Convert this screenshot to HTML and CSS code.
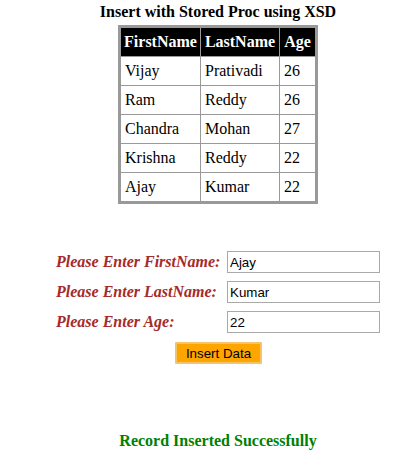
FILE: index.html
```html
<!DOCTYPE html>
<html>
<head>
<meta charset="utf-8">
<link rel="stylesheet" href="styles.css">
</head>
<body>
<div class="page">
  <div class="title">Insert with Stored Proc using XSD</div>
  <table class="grid">
    <thead>
      <tr><th class="c1">FirstName</th><th class="c2">LastName</th><th class="c3">Age</th></tr>
    </thead>
    <tbody>
      <tr><td class="c1">Vijay</td><td class="c2">Prativadi</td><td class="c3">26</td></tr>
      <tr><td class="c1">Ram</td><td class="c2">Reddy</td><td class="c3">26</td></tr>
      <tr><td class="c1">Chandra</td><td class="c2">Mohan</td><td class="c3">27</td></tr>
      <tr><td class="c1">Krishna</td><td class="c2">Reddy</td><td class="c3">22</td></tr>
      <tr><td class="c1">Ajay</td><td class="c2">Kumar</td><td class="c3">22</td></tr>
    </tbody>
  </table>
  <form class="form" onsubmit="return false;">
    <label class="label" for="fn">Please Enter FirstName:</label>
    <input class="field" id="fn" type="text" value="Ajay">
    <label class="label" for="ln">Please Enter LastName:</label>
    <input class="field" id="ln" type="text" value="Kumar">
    <label class="label" for="ag">Please Enter Age:</label>
    <input class="field" id="ag" type="text" value="22">
    <div class="actions"><button class="btn" type="submit">Insert Data</button></div>
  </form>
  <div class="msg">Record Inserted Successfully</div>
</div>
</body>
</html>
```
FILE: styles.css
```css
html, body {
  margin: 0;
  padding: 0;
  background: #ffffff;
}
body {
  font-family: "Liberation Serif", "Times New Roman", serif;
  font-size: 16px;
  color: #000;
}
.page {
  display: flex;
  flex-direction: column;
  align-items: center;
  padding: 3px 0 0 19px;
}
.title {
  font-weight: bold;
  line-height: 18px;
  height: 18px;
}
.grid {
  margin-top: 4px;
  border: 3px solid #999999;
  border-spacing: 0;
  border-collapse: separate;
}
.grid th, .grid td {
  padding: 0 4px;
  border-right: 1px solid #999999;
  border-bottom: 1px solid #999999;
  box-sizing: border-box;
}
.grid th:last-child, .grid td:last-child {
  border-right: none;
}
.grid tbody tr:last-child td {
  border-bottom: none;
}
.grid th {
  background: #000;
  color: #fff;
  font-weight: bold;
  height: 29px;
  text-align: center;
  padding: 0 1px;
}
.grid td {
  height: 29px;
  text-align: left;
}
.grid tbody tr:last-child td {
  height: 28px;
}
.c1 { width: 80px; }
.c2 { width: 79px; }
.c3 { width: 35px; }
.form {
  margin: 47px 0 0 0;
  display: grid;
  grid-template-columns: 171px 153px;
  row-gap: 8px;
  align-items: center;
}
.label {
  font-weight: bold;
  font-style: italic;
  color: #a52a2a;
  line-height: 18px;
}
.field {
  box-sizing: border-box;
  width: 153px;
  height: 22px;
  margin: 0;
  border: 1px solid #a9a9a9;
  padding: 1px 2px;
  font-family: "Liberation Sans", Arial, sans-serif;
  font-size: 13.33px;
  color: #000;
}
.actions {
  grid-column: 1 / 3;
  display: flex;
  justify-content: center;
  padding-top: 1px;
}
.btn {
  box-sizing: border-box;
  width: 87px;
  height: 22px;
  background: #ffa500;
  border: 2px solid #f3c46c;
  border-radius: 1px;
  font-family: "Liberation Sans", Arial, sans-serif;
  font-size: 13.33px;
  color: #000;
  padding: 0;
  margin-left: 1px;
}
.msg {
  margin-top: 68px;
  font-weight: bold;
  color: #008000;
  line-height: 18px;
}
```
